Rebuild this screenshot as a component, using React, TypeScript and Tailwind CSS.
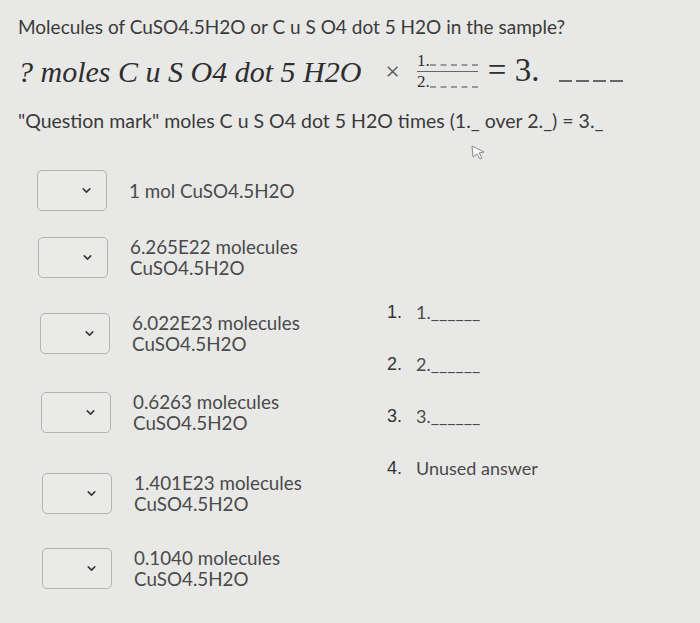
import { ChevronDown } from "lucide-react";

const options = [
  { lines: ["1 mol CuSO4.5H2O"], gap: "mt-0", box: "ml-[37px]" },
  { lines: ["6.265E22 molecules", "CuSO4.5H2O"], gap: "mt-[25px]", box: "ml-[38px]" },
  { lines: ["6.022E23 molecules", "CuSO4.5H2O"], gap: "mt-[34px]", box: "ml-[40px]" },
  { lines: ["0.6263 molecules", "CuSO4.5H2O"], gap: "mt-[37px]", box: "ml-[41px]" },
  { lines: ["1.401E23 molecules", "CuSO4.5H2O"], gap: "mt-[39px]", box: "ml-[42px]" },
  { lines: ["0.1040 molecules", "CuSO4.5H2O"], gap: "mt-[33px]", box: "ml-[42px]" },
];

const answers = [
  { n: "1.", text: "1.______" },
  { n: "2.", text: "2.______" },
  { n: "3.", text: "3.______" },
  { n: "4.", text: "Unused answer" },
];

function Cursor() {
  return (
    <svg width="16" height="16" viewBox="0 0 16 16" className="ml-[470px] mt-[10px]">
      <path
        d="M2 2 L14 8 L9 9 L12 14 L10 15 L7 10 L3 13 Z"
        fill="#fafafa"
        stroke="#8a8a8a"
        strokeWidth="1"
        strokeLinejoin="round"
      />
    </svg>
  );
}

export default function App() {
  return (
    <div className="w-[700px] h-[623px] overflow-hidden bg-[#e8e8e7] text-[#3a3a3a] font-['Lato','Liberation_Sans',sans-serif]">
      <div className="pl-[18px] pt-[14px] text-[19px] leading-[26px]">
        Molecules of CuSO4.5H2O or C u S O4 dot 5 H2O in the sample?
      </div>

      {/* math line */}
      <div className="pl-[18px] mt-[9px] flex items-center h-[44px] text-[#2e2e2e] font-['Liberation_Serif','DejaVu_Serif',serif] text-[30px]">
        <span className="italic">? moles C u S O4 dot 5 H2O</span>
        <span className="ml-[24px] text-[26px] text-[#555]">×</span>
        <span className="ml-[17px] flex flex-col items-start text-[17px] leading-[19px]">
          <span className="flex items-end border-b border-[#666] pb-[1px]">
            1.
            <span className="w-[48px] mb-[4px] border-b-2 border-dashed border-[#999]" />
          </span>
          <span className="flex items-end">
            2.
            <span className="w-[48px] mb-[3px] border-b-2 border-dashed border-[#999]" />
          </span>
        </span>
        <span className="ml-[10px] text-[33px]">= 3.</span>
        <span className="ml-[20px] mt-[20px] flex gap-[4px]">
          <span className="w-[13px] h-[2px] bg-[#666]" />
          <span className="w-[13px] h-[2px] bg-[#666]" />
          <span className="w-[13px] h-[2px] bg-[#666]" />
          <span className="w-[13px] h-[2px] bg-[#666]" />
        </span>
      </div>

      <div className="pl-[18px] mt-[15px] text-[19.5px] leading-[26px]">
        "Question mark" moles C u S O4 dot 5 H2O times (1._ over 2._) = 3._
      </div>

      <Cursor />

      <div className="flex mt-[10px]">
        <div className="w-[360px] flex flex-col">
          {options.map((o, i) => (
            <div key={i} className={`flex items-center ${o.gap}`}>
              <div
                className={`${o.box} w-[70px] h-[41px] shrink-0 rounded-[5px] border border-[#b3b3b3] bg-[#eaeae9] flex items-center justify-center pl-[28px]`}
              >
                <ChevronDown size={13} strokeWidth={3} className="text-[#3a3a3a]" />
              </div>
              <div className="ml-[22px] text-[18.8px] leading-[21px] text-[#4a4a4a]">
                {o.lines.map((l, j) => (
                  <div key={j}>{l}</div>
                ))}
              </div>
            </div>
          ))}
        </div>

        <div className="pt-[131px] pl-[27px] flex flex-col gap-[30px]">
          {answers.map((a, i) => (
            <div key={i} className="flex items-center h-[22px] text-[18px]">
              <span className="w-[29px] font-['Liberation_Sans',sans-serif] text-[#333]">{a.n}</span>
              <span className="text-[#4a4a4a]">{a.text}</span>
            </div>
          ))}
        </div>
      </div>
    </div>
  );
}
